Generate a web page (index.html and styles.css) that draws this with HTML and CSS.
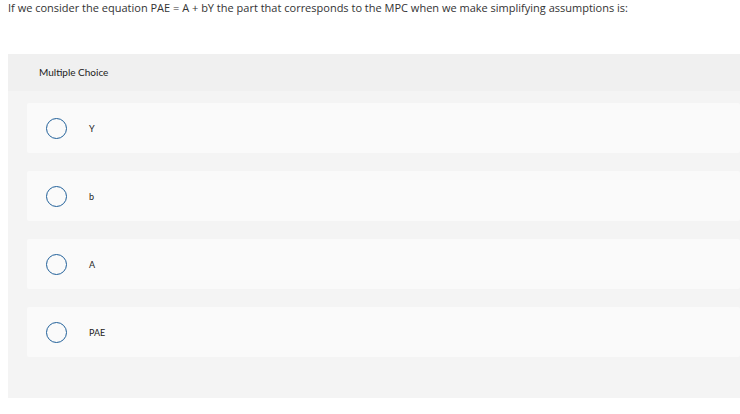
FILE: index.html
```html
<!DOCTYPE html>
<html lang="en">
<head>
    <meta charset="UTF-8">
    <meta name="viewport" content="width=device-width, initial-scale=1.0">
    <title>Question</title>
    <link rel="stylesheet" href="styles.css">
</head>
<body>
    <p class="question">If we consider the equation PAE = A + bY the part that corresponds to the MPC when we make simplifying assumptions is:</p>

    <div class="panel">
        <div class="panel-head">Multiple Choice</div>
        <div class="choices">
            <label class="choice">
                <span class="radio"></span>
                <span class="choice-text">Y</span>
            </label>
            <label class="choice">
                <span class="radio"></span>
                <span class="choice-text">b</span>
            </label>
            <label class="choice">
                <span class="radio"></span>
                <span class="choice-text">A</span>
            </label>
            <label class="choice">
                <span class="radio"></span>
                <span class="choice-text">PAE</span>
            </label>
        </div>
    </div>
</body>
</html>
```

FILE: styles.css
```css
body {
    margin: 0;
    padding: 0;
    font-family: Lato, "Open Sans", sans-serif;
    color: #222;
    background: #fff;
    overflow: hidden;
}
.question {
    margin: 0;
    padding: 1px 8px 0 8px;
    font-family: "Open Sans", sans-serif;
    font-size: 11px;
    line-height: 14px;
    color: #333;
}
.panel {
    margin: 39px 0 0 8px;
    background-color: #f4f4f4;
    padding-bottom: 41px;
}
.panel-head {
    background-color: #f0f0f0;
    height: 37px;
    line-height: 37px;
    padding-left: 31px;
    font-size: 10px;
    color: #222;
}
.choices {
    display: flex;
    flex-direction: column;
    gap: 18px;
    padding: 12px 0 0 19px;
}
.choice {
    display: flex;
    align-items: center;
    height: 50px;
    background-color: #fafafa;
    border-radius: 2px;
    padding-left: 19px;
}
.radio {
    width: 19px;
    height: 19px;
    border: 1.5px solid #1f5f99;
    border-radius: 50%;
    box-sizing: content-box;
}
.choice-text {
    margin-left: 22px;
    font-size: 9px;
    color: #222;
}
```
